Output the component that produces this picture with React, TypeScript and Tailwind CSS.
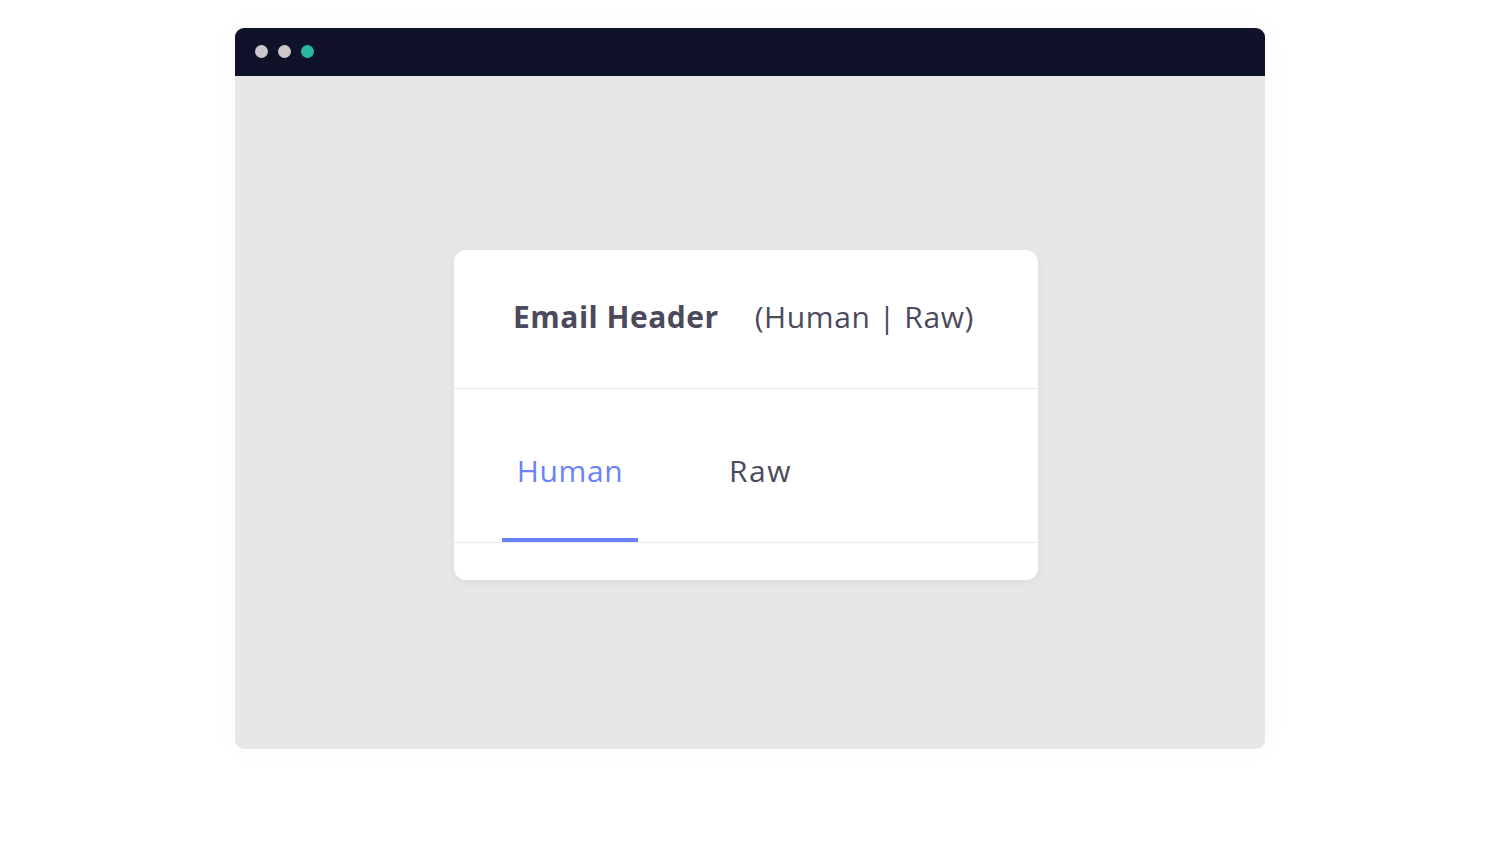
import React from "react";

export default function App() {
  return (
    <div className="w-[1500px] h-[842px] bg-white flex" style={{ fontFamily: "'Open Sans', 'Noto Sans', sans-serif" }}>
      <div className="ml-[235px] mt-[28px] w-[1030px] h-[721px] rounded-[9px] overflow-hidden flex flex-col shadow-[0_0_30px_rgba(0,0,0,0.03)]">
        <div className="h-[48px] bg-[#10122a] flex items-center pl-[20px] pb-[2px] gap-[10px] shrink-0">
          <span className="w-[13px] h-[13px] rounded-full bg-[#cbc7ca]" />
          <span className="w-[13px] h-[13px] rounded-full bg-[#cbc7ca]" />
          <span className="w-[13px] h-[13px] rounded-full bg-[#2bb79f]" />
        </div>
        <div className="flex-1 bg-[#e7e7e7] pt-[174px] pl-[219px]">
          <div className="w-[584px] h-[330px] bg-white rounded-[12px] shadow-[0_2px_10px_rgba(0,0,0,0.05)] flex flex-col">
            <div className="h-[139px] border-b border-[#e6eaf2] flex items-center pl-[59px] gap-[36px] pb-[4px] shrink-0">
              <span className="text-[30px] font-bold tracking-[0.5px] text-[#4b4a5c] leading-none">Email Header</span>
              <span className="text-[30px] tracking-[0.6px] text-[#4b4a5c] leading-none">(Human | Raw)</span>
            </div>
            <div className="h-[154px] border-b border-[#e6eaf2] flex pl-[48px] gap-[77px] shrink-0">
              <div className="h-full w-[136px] flex items-center justify-center pt-[15px] border-b-4 border-[#6b82f7]">
                <span className="text-[30px] tracking-[0.6px] text-[#6b82f7] leading-none">Human</span>
              </div>
              <div className="h-full flex items-center px-[14px] pt-[15px] border-b-4 border-transparent">
                <span className="text-[30px] tracking-[1.5px] text-[#4b4a5c] leading-none">Raw</span>
              </div>
            </div>
          </div>
        </div>
      </div>
    </div>
  );
}
